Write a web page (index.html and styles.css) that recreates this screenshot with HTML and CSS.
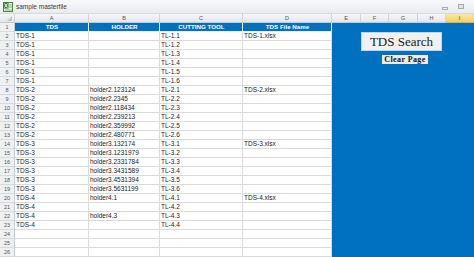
FILE: index.html
```html
<!DOCTYPE html>
<html lang="en">
<head>
  <meta charset="UTF-8" />
  <title>sample masterfile</title>
  <link rel="stylesheet" href="styles.css">
</head>
<body>
  <div class="window">
    <header class="titlebar">
      <svg class="app-icon" width="10" height="10" viewBox="0 0 10 10">
        <rect x="0.5" y="0.5" width="9" height="9" fill="#e9f2e6" stroke="#4f8a3c"/>
        <rect x="0.5" y="0.5" width="5" height="6" fill="#2f7a2c"/>
        <path d="M1.5 1.5 L4.5 5.5 M4.5 1.5 L1.5 5.5" stroke="#fff" stroke-width="1"/>
        <path d="M6 3 H9 M6 5 H9 M2 8 H9" stroke="#7aa56b" stroke-width="0.8"/>
      </svg>
      <span class="doc-name">sample masterfile</span>
      <div class="win-controls">
        <span class="ctl ctl-min"></span>
        <span class="ctl ctl-max"></span>
      </div>
    </header>

    <div class="sheet">
      <!-- column headers -->
      <div class="corner"></div>
      <div class="col-head">A</div>
      <div class="col-head">B</div>
      <div class="col-head">C</div>
      <div class="col-head">D</div>
      <div class="col-head">E</div>
      <div class="col-head">F</div>
      <div class="col-head">G</div>
      <div class="col-head">H</div>
      <div class="col-head active">I</div>

      <!-- blue area E1:I26 -->
      <div class="panel">
        <button class="btn-search">TDS Search</button>
        <button class="btn-clear">Clear Page</button>
      </div>

      <div class="row-head">1</div><div class="cell th">TDS</div><div class="cell th">HOLDER</div><div class="cell th">CUTTING TOOL</div><div class="cell th">TDS File Name</div>
      <div class="row-head">2</div><div class="cell">TDS-1</div><div class="cell"></div><div class="cell">TL-1.1</div><div class="cell">TDS-1.xlsx</div>
      <div class="row-head">3</div><div class="cell">TDS-1</div><div class="cell"></div><div class="cell">TL-1.2</div><div class="cell"></div>
      <div class="row-head">4</div><div class="cell">TDS-1</div><div class="cell"></div><div class="cell">TL-1.3</div><div class="cell"></div>
      <div class="row-head">5</div><div class="cell">TDS-1</div><div class="cell"></div><div class="cell">TL-1.4</div><div class="cell"></div>
      <div class="row-head">6</div><div class="cell">TDS-1</div><div class="cell"></div><div class="cell">TL-1.5</div><div class="cell"></div>
      <div class="row-head">7</div><div class="cell">TDS-1</div><div class="cell"></div><div class="cell">TL-1.6</div><div class="cell"></div>
      <div class="row-head">8</div><div class="cell">TDS-2</div><div class="cell">holder2.123124</div><div class="cell">TL-2.1</div><div class="cell">TDS-2.xlsx</div>
      <div class="row-head">9</div><div class="cell">TDS-2</div><div class="cell">holder2.2345</div><div class="cell">TL-2.2</div><div class="cell"></div>
      <div class="row-head">10</div><div class="cell">TDS-2</div><div class="cell">holder2.118434</div><div class="cell">TL-2.3</div><div class="cell"></div>
      <div class="row-head">11</div><div class="cell">TDS-2</div><div class="cell">holder2.239213</div><div class="cell">TL-2.4</div><div class="cell"></div>
      <div class="row-head">12</div><div class="cell">TDS-2</div><div class="cell">holder2.359992</div><div class="cell">TL-2.5</div><div class="cell"></div>
      <div class="row-head">13</div><div class="cell">TDS-2</div><div class="cell">holder2.480771</div><div class="cell">TL-2.6</div><div class="cell"></div>
      <div class="row-head">14</div><div class="cell">TDS-3</div><div class="cell">holder3.132174</div><div class="cell">TL-3.1</div><div class="cell">TDS-3.xlsx</div>
      <div class="row-head">15</div><div class="cell">TDS-3</div><div class="cell">holder3.1231979</div><div class="cell">TL-3.2</div><div class="cell"></div>
      <div class="row-head">16</div><div class="cell">TDS-3</div><div class="cell">holder3.2331784</div><div class="cell">TL-3.3</div><div class="cell"></div>
      <div class="row-head">17</div><div class="cell">TDS-3</div><div class="cell">holder3.3431589</div><div class="cell">TL-3.4</div><div class="cell"></div>
      <div class="row-head">18</div><div class="cell">TDS-3</div><div class="cell">holder3.4531394</div><div class="cell">TL-3.5</div><div class="cell"></div>
      <div class="row-head">19</div><div class="cell">TDS-3</div><div class="cell">holder3.5631199</div><div class="cell">TL-3.6</div><div class="cell"></div>
      <div class="row-head">20</div><div class="cell">TDS-4</div><div class="cell">holder4.1</div><div class="cell">TL-4.1</div><div class="cell">TDS-4.xlsx</div>
      <div class="row-head">21</div><div class="cell">TDS-4</div><div class="cell"></div><div class="cell">TL-4.2</div><div class="cell"></div>
      <div class="row-head">22</div><div class="cell">TDS-4</div><div class="cell">holder4.3</div><div class="cell">TL-4.3</div><div class="cell"></div>
      <div class="row-head">23</div><div class="cell">TDS-4</div><div class="cell"></div><div class="cell">TL-4.4</div><div class="cell"></div>
      <div class="row-head">24</div><div class="cell"></div><div class="cell"></div><div class="cell"></div><div class="cell"></div>
      <div class="row-head">25</div><div class="cell"></div><div class="cell"></div><div class="cell"></div><div class="cell"></div>
      <div class="row-head">26</div><div class="cell"></div><div class="cell"></div><div class="cell"></div><div class="cell"></div>
    </div>
  </div>
</body>
</html>
```

FILE: styles.css
```css
* {
  margin: 0; padding: 0; box-sizing: border-box;
}

body, html {
  width: 474px;
  height: 257px;
  overflow: hidden;
  background: #ffffff;
  font-family: 'Liberation Sans', Arial, sans-serif;
}

.window {
  display: flex;
  flex-direction: column;
  height: 100%;
}

.titlebar {
  flex-shrink: 0;
  height: 14px;
  display: flex;
  align-items: center;
  padding-left: 3px;
  background: linear-gradient(#f7f8fa, #e9ecef);
  border-bottom: 1px solid #d6d9dd;
}

.app-icon {
  margin-right: 3px;
}

.doc-name {
  font-size: 6.5px;
  color: #3b3b3b;
}

.win-controls {
  margin-left: auto;
  display: flex;
  align-items: center;
  gap: 10px;
  padding-right: 10px;
}

.ctl {
  display: block;
  border: 1px solid #a7abb0;
}

.ctl-min {
  width: 6px;
  height: 3px;
  margin-top: 3px;
}

.ctl-max {
  width: 6px;
  height: 5px;
  background: #dfe2e6;
}

.sheet {
  display: grid;
  grid-template-columns: 15px 74px 71px 83px 89px 29px 28px 29px 28px 28px;
  grid-auto-rows: 9px;
  flex: 1;
  min-height: 0;
}

.corner,
.col-head {
  background: linear-gradient(#f6f7f8, #e4e6e9);
  border-right: 1px solid #d0d3d7;
  border-bottom: 1px solid #c6c9cd;
  font-size: 5.5px;
  color: #555;
  text-align: center;
  line-height: 8px;
}

.corner {
  position: relative;
}

.corner::after {
  content: "";
  position: absolute;
  right: 2px;
  bottom: 1px;
  border-left: 5px solid transparent;
  border-bottom: 5px solid #c4c7cb;
}

.col-head.active {
  background: linear-gradient(#fbe7a8, #f5cf5e);
  border-bottom-color: #e2b23c;
  color: #5b4a10;
}

.row-head {
  grid-column: 1;
  background: #eef0f2;
  border-right: 1px solid #c6c9cd;
  border-bottom: 1px solid #d6d9dd;
  font-size: 5.5px;
  color: #555;
  text-align: center;
  line-height: 8px;
}

.cell {
  border-right: 1px solid #dadada;
  border-bottom: 1px solid #dadada;
  font-size: 6.5px;
  line-height: 8px;
  color: #222;
  padding-left: 1px;
  white-space: nowrap;
  overflow: hidden;
}

.cell.th {
  background: #0070c0;
  color: #ffffff;
  font-weight: bold;
  font-size: 6.2px;
  text-align: center;
  border-right-color: #ffffff;
  border-bottom-color: #e8eef5;
}

.panel {
  grid-column: 6 / 11;
  grid-row: 2 / span 26;
  background: #0070c0;
  display: flex;
  flex-direction: column;
  align-items: center;
  padding-top: 9px;
  gap: 4px;
}

.btn-search {
  width: 81px;
  height: 19px;
  margin-right: 3px;
  background: #f1f1f1;
  border: 1px solid #c9d3dc;
  font-family: 'Liberation Serif', 'Times New Roman', serif;
  font-size: 13px;
  color: #1a1a1a;
}

.btn-clear {
  width: 46px;
  height: 9px;
  margin-left: 4px;
  background: #ececec;
  border: none;
  font-family: 'Liberation Serif', 'Times New Roman', serif;
  font-weight: bold;
  font-size: 8px;
  line-height: 9px;
  letter-spacing: 0.4px;
  color: #111;
}
```
